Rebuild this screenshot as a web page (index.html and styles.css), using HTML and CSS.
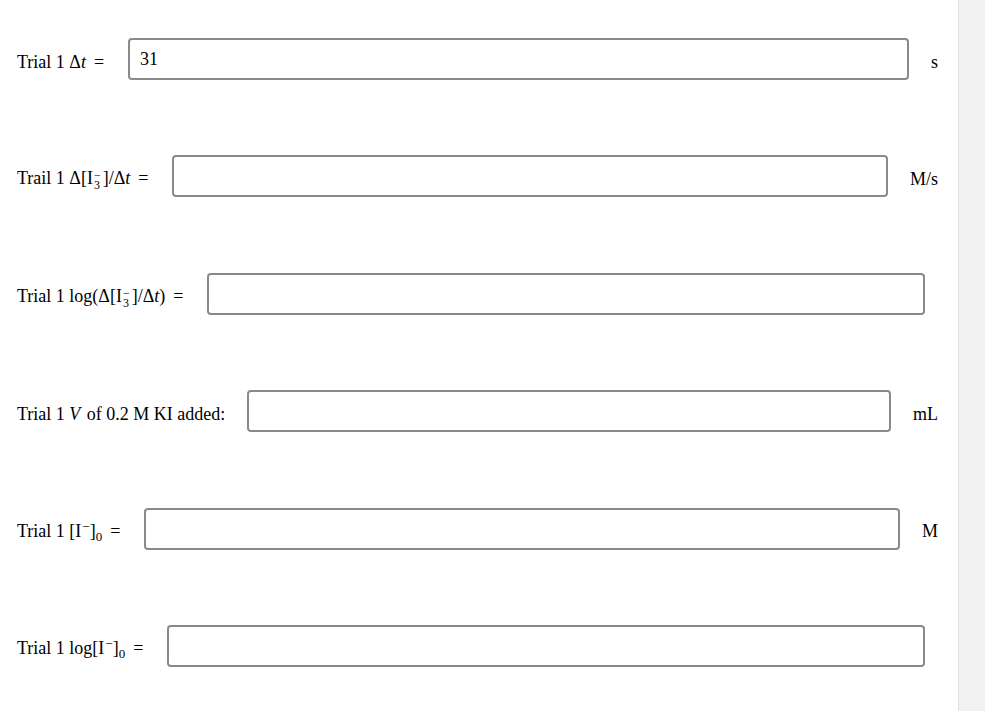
FILE: index.html
```html
<!DOCTYPE html>
<html lang="en">
<head>
<meta charset="utf-8">
<title>Trial 1</title>
<link rel="stylesheet" href="styles.css">
</head>
<body>
<div class="page">
  <main class="form">
    <div class="row">
      <label class="label">Trial 1 Δ<i>t</i><span class="eq">=</span></label>
      <input class="field" type="text" value="31">
      <span class="unit">s</span>
    </div>
    <div class="row">
      <label class="label">Trail 1 Δ[I<span class="ss"><span class="sp">−</span><span class="sb">3</span></span>]/Δ<i>t</i><span class="eq">=</span></label>
      <input class="field" type="text">
      <span class="unit">M/s</span>
    </div>
    <div class="row">
      <label class="label">Trial 1 log(Δ[I<span class="ss"><span class="sp">−</span><span class="sb">3</span></span>]/Δ<i>t</i>)<span class="eq">=</span></label>
      <input class="field nounit" type="text">
    </div>
    <div class="row">
      <label class="label">Trial 1 <i class="var">V</i> of 0.2 M KI added:</label>
      <input class="field" type="text">
      <span class="unit">mL</span>
    </div>
    <div class="row">
      <label class="label">Trial 1 [I<span class="sup">−</span>]<span class="sub">0</span><span class="eq">=</span></label>
      <input class="field" type="text">
      <span class="unit">M</span>
    </div>
    <div class="row">
      <label class="label">Trial 1 log[I<span class="sup">−</span>]<span class="sub">0</span><span class="eq">=</span></label>
      <input class="field nounit" type="text">
    </div>
  </main>
  <aside class="track"></aside>
</div>
</body>
</html>
```
FILE: styles.css
```css
html, body {
  margin: 0;
  padding: 0;
  background: #ffffff;
}
body {
  font-family: "Liberation Serif", "Times New Roman", serif;
  font-size: 18px;
  color: #000;
}
.page {
  display: flex;
  height: 711px;
  overflow: hidden;
}
.form {
  flex: 1;
  display: flex;
  flex-direction: column;
  gap: 75.4px;
  padding: 38px 20px 0 17px;
}
.row {
  display: flex;
  align-items: center;
  height: 42px;
}
.label {
  white-space: nowrap;
  margin-right: 22px;
  padding-top: 6px;
}
.eq {
  margin-left: 8px;
  margin-right: 2px;
}
.var {
  margin-right: 2px;
}
.field {
  flex: 1;
  min-width: 0;
  height: 42px;
  box-sizing: border-box;
  border: 2px solid #8a8a8a;
  border-radius: 4px;
  padding: 0 10px;
  font-family: "Liberation Serif", "Times New Roman", serif;
  font-size: 18px;
  color: #000;
  background: #fff;
  outline: none;
}
.field.nounit {
  margin-right: 13px;
}
.unit {
  margin-left: 22px;
  padding-top: 6px;
  white-space: nowrap;
}
.ss {
  display: inline-block;
  vertical-align: -5px;
  font-size: 12px;
  line-height: 10px;
  margin-left: 1px;
  margin-right: 2px;
}
.sp, .sb {
  display: block;
}
.sup {
  font-size: 13px;
  vertical-align: 6px;
  line-height: 0;
  margin-left: 1px;
}
.sub {
  font-size: 13px;
  vertical-align: -4px;
  line-height: 0;
}
.track {
  width: 26px;
  flex: none;
  background: #f1f1f1;
  border-left: 1px solid #e2e2e2;
}
```
